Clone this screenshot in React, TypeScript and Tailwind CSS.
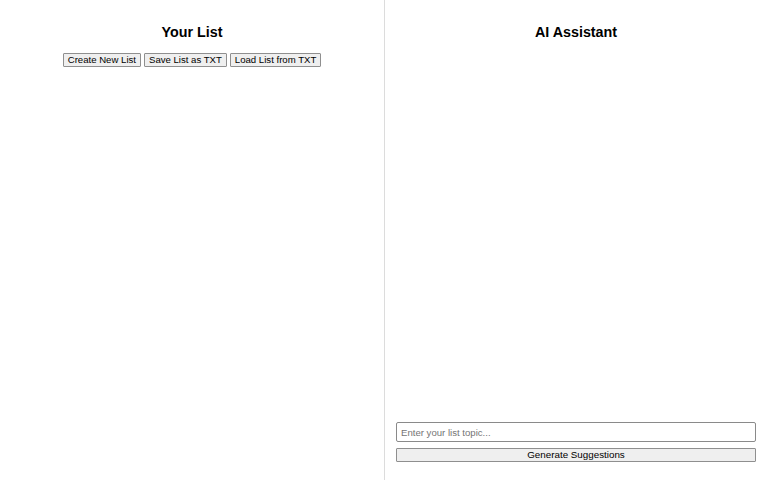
import { useState } from "react";

export default function App() {
  const [topic, setTopic] = useState("");

  return (
    <div className="flex h-[480px] w-[768px] font-['Liberation_Sans',Arial,sans-serif] text-black bg-white">
      {/* List panel */}
      <div className="flex w-[384px] flex-col items-center">
        <h3 className="mt-[24px] text-[14.3px] font-bold leading-[16px]">Your List</h3>
        <div className="mt-[13px] flex gap-[3px]">
          <button className="h-[14px] rounded-[1px] border border-[#8f8f8f] bg-[#efefef] px-[4px] text-[9.6px] leading-[12px]">
            Create New List
          </button>
          <button className="h-[14px] rounded-[1px] border border-[#8f8f8f] bg-[#efefef] px-[4px] text-[9.6px] leading-[12px]">
            Save List as TXT
          </button>
          <button className="h-[14px] rounded-[1px] border border-[#8f8f8f] bg-[#efefef] px-[4px] text-[9.6px] leading-[12px]">
            Load List from TXT
          </button>
        </div>
      </div>

      {/* Assistant panel */}
      <div className="flex w-[384px] flex-col border-l border-[#dcdcdc] pl-[11px] pr-[12px] pb-[18px]">
        <h3 className="mt-[24px] text-center text-[14.3px] font-bold leading-[16px]">AI Assistant</h3>
        <div className="flex-1" />
        <input
          value={topic}
          onChange={(e) => setTopic(e.target.value)}
          placeholder="Enter your list topic..."
          className="h-[20px] w-full rounded-[2px] border border-[#8a8a8a] px-[4px] text-[9.6px] text-black outline-none placeholder:text-[#757575]"
        />
        <button className="mt-[6px] h-[14px] w-full rounded-[1px] border border-[#8f8f8f] bg-[#efefef] text-[9.8px] leading-[12px]">
          Generate Suggestions
        </button>
      </div>
    </div>
  );
}
